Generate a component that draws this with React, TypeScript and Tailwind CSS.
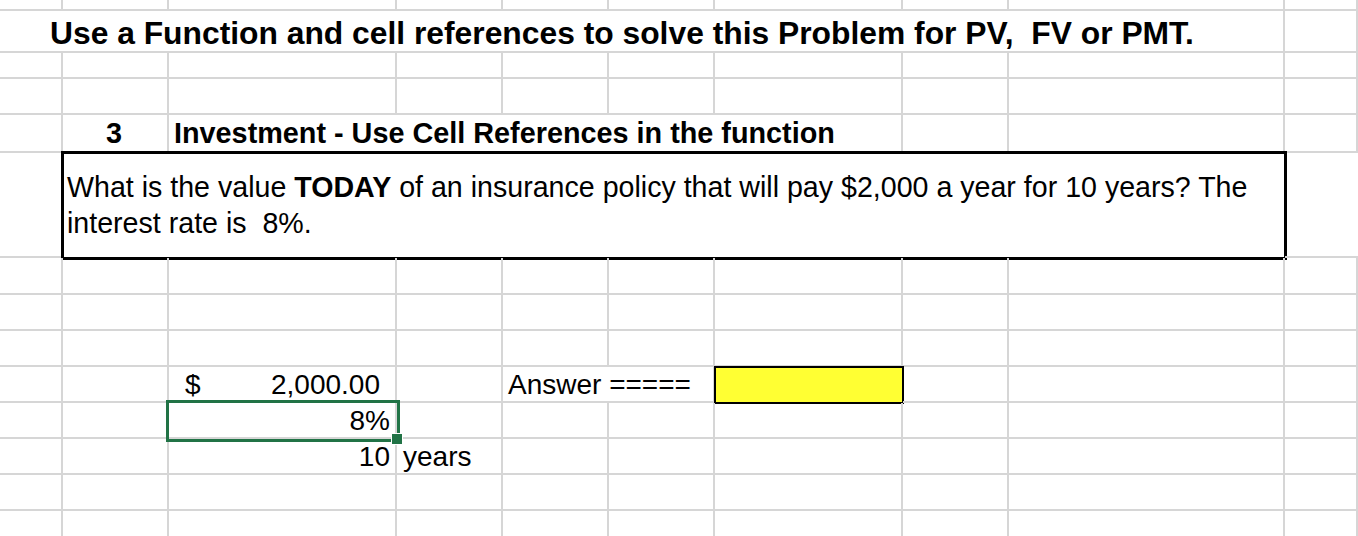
import React from "react";

const G = "border-r-2 border-b-2 border-[#d6d6d6]";

function Blank({ span = "" }: { span?: string }) {
  return <div className={`${G} ${span}`} />;
}

function Blanks({ n }: { n: number }) {
  return (
    <>
      {Array.from({ length: n }).map((_, i) => (
        <Blank key={i} />
      ))}
    </>
  );
}

export default function App() {
  return (
    <div className="w-[1358px] h-[536px] overflow-hidden bg-white font-['Liberation_Sans',Arial,sans-serif] text-black">
      <div className="grid grid-cols-[63px_106px_228px_106px_106px_106px_188px_106px_276px_1fr] grid-rows-[11px_42px_26px_36px_38px_105px_37px_36px_36px_36px_36px_36px_36px_36px]">
        {/* row 1 */}
        <Blanks n={10} />
        {/* row 2 title */}
        <div className={`${G} col-span-9 flex items-end pl-[50px] pb-[1px]`}>
          <span className="whitespace-pre text-[31.8px] font-bold leading-none">
            {"Use a Function and cell references to solve this Problem for PV,  FV or PMT."}
          </span>
        </div>
        <Blank />
        {/* row 3, 4 */}
        <Blanks n={10} />
        <Blanks n={10} />
        {/* row 5 heading */}
        <Blank />
        <div className={`${G} flex items-end justify-center pb-[3.5px] pr-[2px]`}>
          <span className="text-[28.8px] font-bold leading-none">3</span>
        </div>
        <div className={`${G} col-span-5 flex items-end pl-[5px] pb-[3.5px]`}>
          <span className="whitespace-pre text-[28.8px] font-bold leading-none">
            Investment - Use Cell References in the function
          </span>
        </div>
        <Blanks n={3} />
        {/* row 6 box */}
        <Blank />
        <div className="col-span-8 outline-[3px] outline-black outline-offset-[-1px] pl-[4px] pt-[16px]">
          <p className="whitespace-pre text-[28.6px] leading-[36px]">
            What is the value <b>TODAY</b> of an insurance policy that will pay $2,000 a year for 10 years? The
            <br />
            {"interest rate is  8%."}
          </p>
        </div>
        <div className="border-b-2 border-[#d6d6d6]" />
        {/* rows 7-9 */}
        <Blanks n={10} />
        <Blanks n={10} />
        <Blanks n={10} />
        {/* row 10 */}
        <Blanks n={2} />
        <div className={`${G} flex items-end justify-between pl-[16px] pr-[15px] pb-[2px] text-[28px] leading-none`}>
          <span>$</span>
          <span>2,000.00</span>
        </div>
        <Blank />
        <div className={`${G} col-span-2 flex items-end pl-[5px] pb-[2px]`}>
          <span className="whitespace-pre text-[28px] leading-none">Answer =====</span>
        </div>
        <div className="bg-[#ffff33] outline-2 outline-black outline-offset-[-1px]" />
        <Blanks n={3} />
        {/* row 11 */}
        <Blanks n={2} />
        <div className={`${G} relative flex items-end justify-end pr-[5px] pb-[2px] outline-[3px] outline-[#217346]`}>
          <span className="text-[28px] leading-none">8%</span>
          <div className="absolute right-[-8px] bottom-[-8px] w-[12px] h-[12px] bg-[#217346] border border-white" />
        </div>
        <Blanks n={7} />
        {/* row 12 */}
        <Blanks n={2} />
        <div className={`${G} flex items-end justify-end pr-[5px] pb-[2px]`}>
          <span className="text-[28px] leading-none">10</span>
        </div>
        <div className={`${G} flex items-end pl-[6px] pb-[2px]`}>
          <span className="text-[28px] leading-none">years</span>
        </div>
        <Blanks n={6} />
        {/* rows 13-14 */}
        <Blanks n={10} />
        <Blanks n={10} />
      </div>
    </div>
  );
}
